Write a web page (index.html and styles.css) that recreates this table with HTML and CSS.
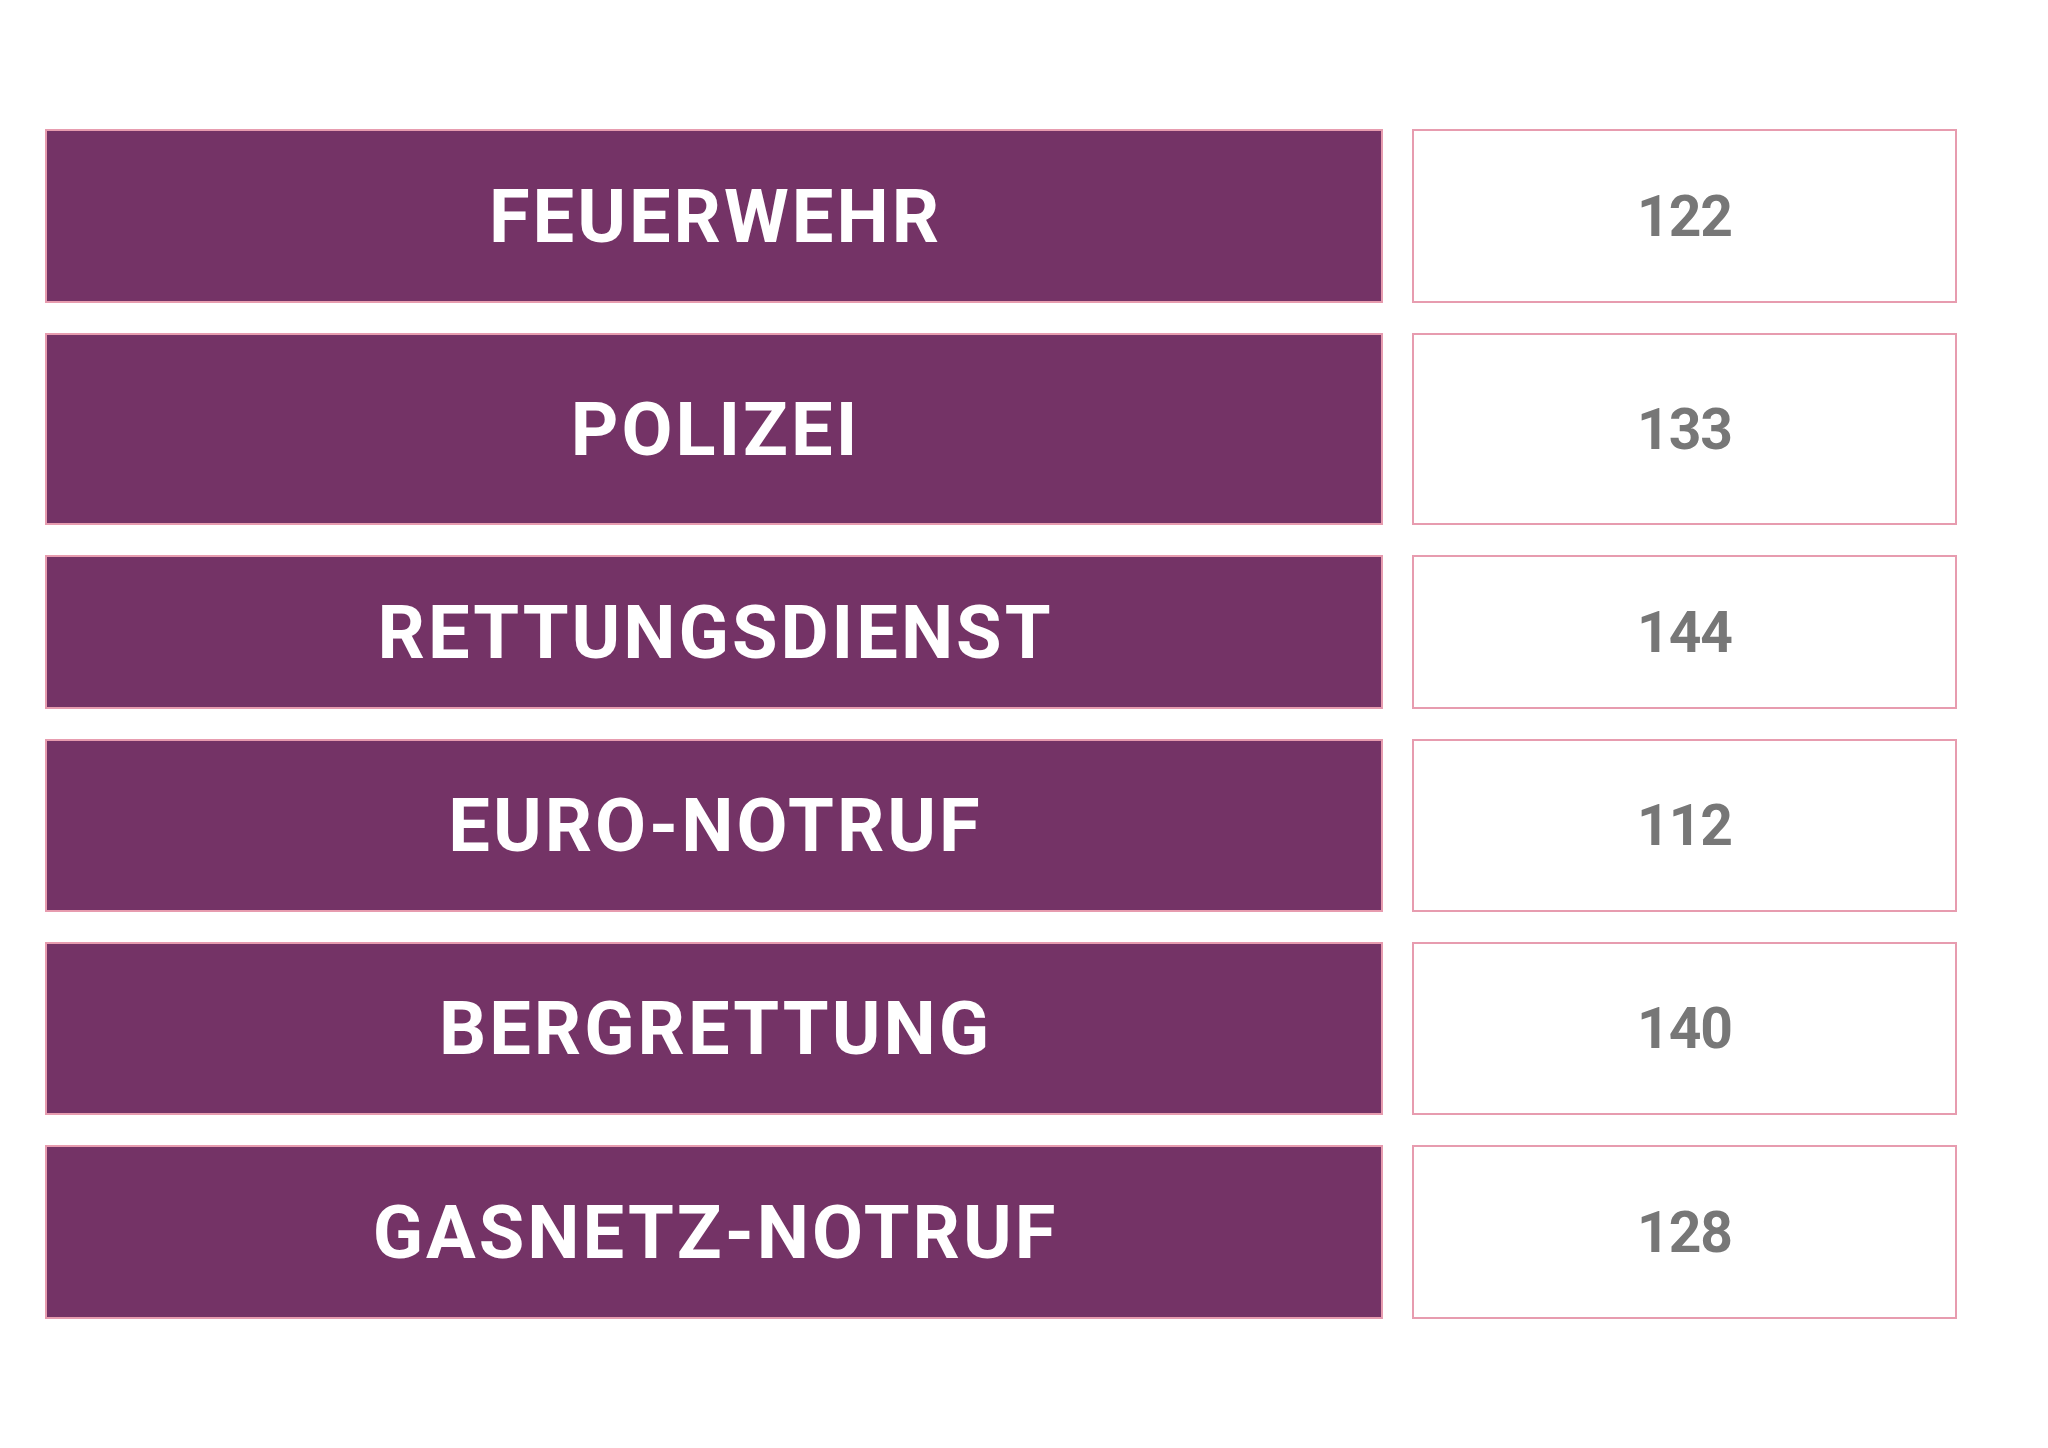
FILE: index.html
```html
<!DOCTYPE html>
<html lang="de">
<head>
<meta charset="utf-8">
<title>Notrufnummern</title>
<link rel="stylesheet" href="styles.css">
</head>
<body>
<main class="table">
  <div class="label">FEUERWEHR</div><div class="num">122</div>
  <div class="label">POLIZEI</div><div class="num">133</div>
  <div class="label">RETTUNGSDIENST</div><div class="num">144</div>
  <div class="label">EURO-NOTRUF</div><div class="num">112</div>
  <div class="label">BERGRETTUNG</div><div class="num">140</div>
  <div class="label">GASNETZ-NOTRUF</div><div class="num">128</div>
</main>
</body>
</html>
```
FILE: styles.css
```css
html, body {
  margin: 0;
  padding: 0;
  background: #ffffff;
}
.table {
  display: grid;
  grid-template-columns: 1338px 545px;
  grid-template-rows: 174px 192px 154px 173px 173px 174px;
  column-gap: 29px;
  row-gap: 30px;
  padding: 129px 0 0 45px;
}
.label, .num {
  box-sizing: border-box;
  border: 2px solid #e79caf;
  display: flex;
  align-items: center;
  justify-content: center;
}
.label {
  background: #743366;
  color: #ffffff;
  font-family: Roboto, "Liberation Sans", sans-serif;
  font-weight: 700;
  font-size: 74px;
  letter-spacing: 3px;
  padding-left: 3px;
}
.num {
  background: #ffffff;
  color: #777777;
  font-family: Roboto, "Liberation Sans", sans-serif;
  font-weight: 700;
  font-size: 57px;
  letter-spacing: -1px;
}
```
